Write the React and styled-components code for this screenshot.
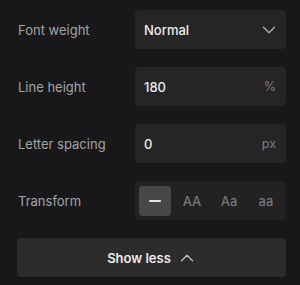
import React, { useState } from 'react';
import styled, { createGlobalStyle } from 'styled-components';
import { ChevronDown, ChevronUp } from 'lucide-react';

const GlobalStyle = createGlobalStyle`
    html, body {
        margin:0;
        padding:0;
        background:#18181a;
    }
    body {
        font-family:Inter, "Noto Sans", sans-serif;
        -webkit-font-smoothing:antialiased;
    }
`;

const Panel = styled.section`
    width:300px;
    height:285px;
    box-sizing:border-box;
    padding:10px 14px 0 17px;
    background:#18181a;
    display:flex;
    flex-direction:column;
    gap:18px;
`;

const Row = styled.div`
    display:grid;
    grid-template-columns:118px 151px;
    align-items:center;
    height:39px;
`;

const Label = styled.span`
    font-size:13px;
    color:#a3a3a6;
    padding-left:1px;
`;

const Field = styled.div`
    height:39px;
    box-sizing:border-box;
    background:#252526;
    border-radius:4px;
    display:flex;
    align-items:center;
    padding:0 10px 0 9px;
    color:#ececec;
    font-size:13px;
    font-weight:500;
    svg {
        margin-left:auto;
        margin-right:-4px;
        color:#b5b5b8;
    }
`;

const Value = styled.span`
    flex:1;
`;

const Unit = styled.span`
    color:#7c7c80;
    font-size:12.5px;
    font-weight:400;
`;

const Segmented = styled.div`
    height:39px;
    box-sizing:border-box;
    background:#222223;
    border-radius:4px;
    padding:5px 4px 4px 4px;
    display:grid;
    grid-template-columns:repeat(4, 32px);
    gap:5px;
`;

const Segment = styled.button.attrs({ type : 'button' })`
    border:0;
    margin:0;
    padding:0;
    height:30px;
    border-radius:4px;
    background:${props => props.active ? '#474748' : 'transparent'};
    color:#76767a;
    font-family:inherit;
    font-size:13px;
    font-weight:500;
    display:flex;
    align-items:center;
    justify-content:center;
    cursor:pointer;
`;

const Dash = styled.span`
    width:12px;
    height:2px;
    border-radius:1px;
    background:#e4e4e6;
`;

const ToggleButton = styled.button.attrs({ type : 'button' })`
    width:269px;
    height:39px;
    border:0;
    border-radius:4px;
    background:#2c2c2d;
    color:#ececec;
    font-family:inherit;
    font-size:13px;
    font-weight:600;
    display:flex;
    align-items:center;
    justify-content:center;
    gap:5px;
    padding:0 0 0 2px;
    svg {
        color:#c4c4c6;
    }
`;

const options = ['none', 'AA', 'Aa', 'aa'];

export default function App() {
    const [transform, setTransform] = useState('none');
    return (
        <>
            <GlobalStyle />
            <Panel>
                <Row>
                    <Label>Font weight</Label>
                    <Field>
                        <Value>Normal</Value>
                        <ChevronDown size={22} strokeWidth={1.3} />
                    </Field>
                </Row>
                <Row>
                    <Label>Line height</Label>
                    <Field>
                        <Value>180</Value>
                        <Unit>%</Unit>
                    </Field>
                </Row>
                <Row>
                    <Label>Letter spacing</Label>
                    <Field>
                        <Value>0</Value>
                        <Unit>px</Unit>
                    </Field>
                </Row>
                <Row>
                    <Label>Transform</Label>
                    <Segmented>
                        {options.map(o => (
                            <Segment key={o} active={transform === o} onClick={() => setTransform(o)}>
                                {o === 'none' ? <Dash /> : o}
                            </Segment>
                        ))}
                    </Segmented>
                </Row>
                <ToggleButton>
                    Show less
                    <ChevronUp size={22} strokeWidth={1.3} />
                </ToggleButton>
            </Panel>
        </>
    );
}
